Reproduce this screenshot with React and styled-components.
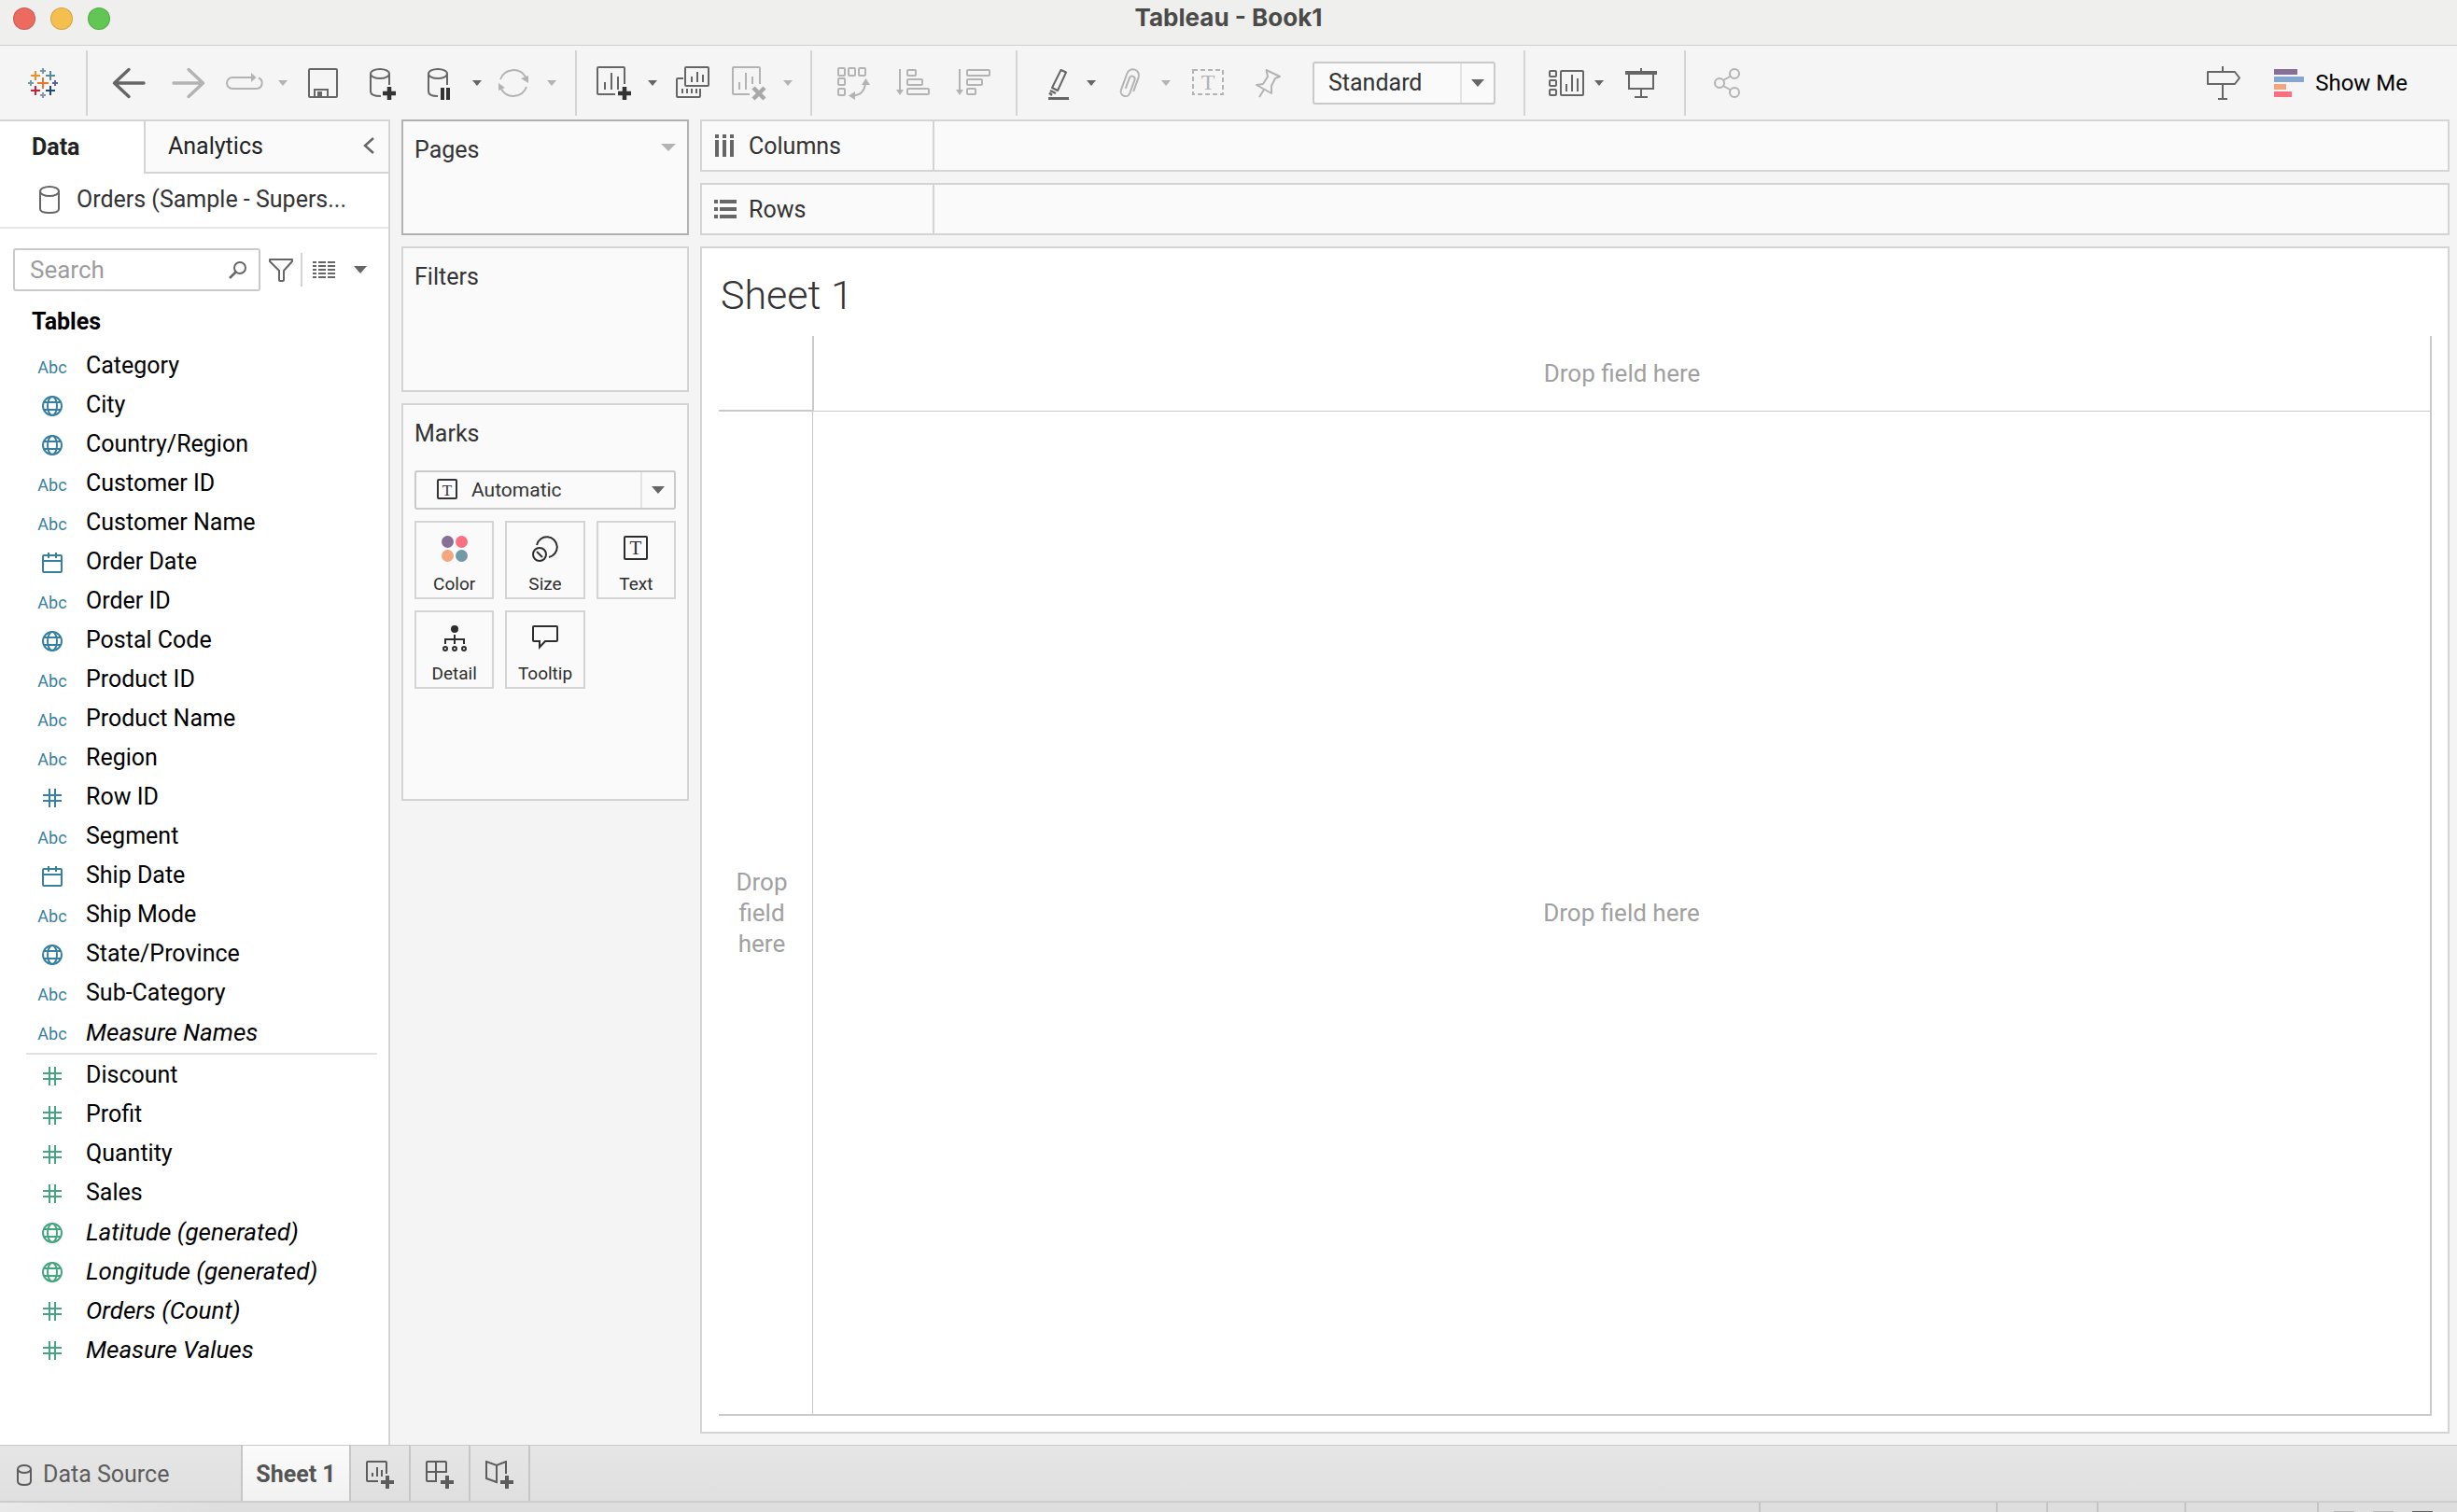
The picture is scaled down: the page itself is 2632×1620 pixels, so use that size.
import React from 'react';
import styled, { createGlobalStyle } from 'styled-components';

const GlobalStyle = createGlobalStyle`
  * {
    box-sizing: border-box;
  }

  body {
    margin: 0;
    background: #f4f4f4;
    color: #333;
    font-family: Roboto, "Liberation Sans", sans-serif;
    font-size: 25px;
    line-height: 30px;
  }

  button, input, select {
    font: inherit;
    color: inherit;
  }

  h1, h2, h3, ul {
    margin: 0;
    padding: 0;
    font: inherit;
  }
`;

const Window = styled.div`
  display: flex;
  flex-direction: column;
  min-height: 100vh;
`;

const TitleBar = styled.header`
  display: grid;
  grid-template-columns: 1fr auto 1fr;
  align-items: start;
  height: 49px;
  padding: 4px 14px 0;
  background: #efefed;
  border-bottom: 1px solid #cfcfcf;
`;

const Lights = styled.div`
  display: flex;
  gap: 16px;
  padding-top: 4px;
`;

const Light = styled.button`
  width: 24px;
  height: 24px;
  padding: 0;
  border: 1px solid rgba(0, 0, 0, 0.15);
  border-radius: 50%;
  background: ${props => props.$color};
`;

const WindowTitle = styled.h1`
  color: #4a4a48;
  font-family: Inter, sans-serif;
  font-size: 26px;
  font-weight: 700;
`;

const Toolbar = styled.div`
  display: flex;
  height: 79px;
  padding: 5px 52px 4px 0;
  background: #f5f5f5;
`;

const ToolGroup = styled.div`
  display: flex;
  align-items: center;
  padding: 0 ${props => props.$right || 8}px 0 ${props => props.$left || 8}px;
  border-right: ${props => (props.$last ? 'none' : '2px solid #d4d4d4')};
`;

const Tool = styled.button`
  display: flex;
  align-items: center;
  justify-content: center;
  width: ${props => props.$w || 64}px;
  height: 48px;
  padding: 0;
  border: none;
  background: none;
  color: #666;

  &:disabled {
    color: #b3b3b3;
  }

  svg {
    flex: none;
  }
`;

const Spacer = styled.div`
  flex: 1;
`;

const ShowMeButton = styled.button`
  display: flex;
  align-items: center;
  gap: 12px;
  padding: 0;
  margin-left: 22px;
  border: none;
  background: none;
  color: #000;
  font-size: 24px;
`;

const SelectBox = styled.div`
  display: flex;
  align-items: stretch;
  height: 42px;
  border: 2px solid #c9c9c9;
  border-radius: 3px;
  background: #fafafa;
  font-size: 21px;
`;

const FitSelectBox = styled(SelectBox)`
  width: 196px;
  height: 46px;
  margin-left: 22px;
  font-size: 25px;
`;

const SelectIcon = styled.span`
  display: flex;
  align-items: center;
  padding: 0 0 4px 22px;
`;

const Select = styled.select`
  flex: 1;
  min-width: 0;
  padding: 0 0 0 15px;
  border: none;
  background: none;
  appearance: none;
  outline: none;
`;

const SelectArrow = styled.span`
  display: flex;
  align-items: center;
  justify-content: center;
  width: 36px;
  border-left: 2px solid #e4e4e4;
  color: #666;
  pointer-events: none;
`;

const Workspace = styled.div`
  display: flex;
  flex: 1;
`;

const DataPane = styled.aside`
  width: 418px;
  flex: none;
  background: #fff;
  border-top: 2px solid #d4d4d4;
  border-right: 2px solid #d4d4d4;
`;

const PaneTabs = styled.div`
  display: flex;
  height: 56px;
`;

const PaneTab = styled.button`
  flex: ${props => (props.$active ? '0 0 154px' : '1')};
  padding: 0 0 0 ${props => (props.$active ? 34 : 24)}px;
  border: solid #d4d4d4;
  border-width: ${props => (props.$active ? '0' : '0 0 2px 2px')};
  background: ${props => (props.$active ? '#fff' : '#fafafa')};
  color: #222;
  font-weight: ${props => (props.$active ? 700 : 400)};
  text-align: left;
`;

const CollapseButton = styled.button`
  width: 42px;
  padding: 0;
  border: none;
  border-bottom: 2px solid #d4d4d4;
  background: #fafafa;
  color: #666;
`;

const SourceRow = styled.button`
  display: flex;
  align-items: center;
  gap: 18px;
  width: 100%;
  height: 59px;
  padding: 0 0 2px 42px;
  border: none;
  border-bottom: 2px solid #e6e6e6;
  background: none;

  svg {
    color: #666;
  }
`;

const SearchRow = styled.div`
  display: flex;
  align-items: center;
  height: 46px;
  margin: 21px 14px 0;
`;

const SearchBox = styled.label`
  display: flex;
  align-items: center;
  flex: 1;
  min-width: 0;
  height: 46px;
  padding: 0 12px 0 16px;
  border: 2px solid #c9c9c9;
  border-radius: 3px;
  color: #666;

  svg {
    flex: none;
  }

  input {
    flex: 1;
    width: 100%;
    min-width: 0;
    padding: 0;
    border: none;
    outline: none;
    background: none;
    font-size: 26px;
  }

  input::placeholder {
    color: #9c9c9c;
    opacity: 1;
  }
`;

const IconButton = styled.button`
  display: flex;
  align-items: center;
  justify-content: center;
  flex: none;
  width: ${props => props.$w || 42}px;
  height: 36px;
  padding: 0;
  border: none;
  border-right: ${props => (props.$divided ? '2px solid #d4d4d4' : 'none')};
  background: none;
  color: #666;
`;

const TablesHeading = styled.h2`
  padding: 18px 34px 10px;
  color: #000;
  font-weight: 700;
`;

const FieldList = styled.ul`
  padding-top: 1px;
  margin: 0 12px 0 28px;
  border-top: ${props => (props.$measures ? '2px solid #e0e0e0' : 'none')};
  list-style: none;

  & + & {
    margin-top: 1px;
  }
`;

const Field = styled.li`
  display: flex;
  align-items: center;
  height: 42px;
  color: #000;
  font-size: ${props => (props.$italic ? 26 : 25)}px;
  font-style: ${props => (props.$italic ? 'italic' : 'normal')};
`;

const FieldIcon = styled.span`
  display: flex;
  justify-content: center;
  width: 56px;
  padding-top: ${props => (props.$text ? 4 : 2)}px;
  margin-right: 8px;
  color: ${props => (props.$measure ? '#46a481' : '#3880a0')};
  font-size: 18px;
  font-style: normal;
`;

const Cards = styled.div`
  display: flex;
  flex-direction: column;
  gap: 12px;
  flex: none;
  width: 308px;
  margin: 0 12px;
`;

const Card = styled.section`
  height: ${props => props.$height}px;
  padding: 16px 12px 0;
  border: 2px solid ${props => (props.$focused ? '#b1b1b1' : '#d4d4d4')};
  background: #fafafa;
`;

const CardTitle = styled.h3`
  display: flex;
  align-items: flex-start;
  justify-content: space-between;
  height: 30px;
  margin-bottom: ${props => props.$gap || 0}px;

  button {
    display: flex;
    padding: 8px 0;
    border: none;
    background: none;
    color: #b3b3b3;
  }
`;

const MarkGrid = styled.div`
  display: grid;
  grid-template-columns: repeat(3, 1fr);
  gap: 12px;
  margin-top: 12px;
`;

const MarkButton = styled.button`
  display: flex;
  flex-direction: column;
  align-items: center;
  justify-content: space-between;
  height: 84px;
  padding: 14px 0 2px;
  border: 2px solid #d4d4d4;
  background: #fafafa;
  color: #2d2d2d;
  font-size: 19px;
  line-height: 24px;
`;

const Main = styled.main`
  display: flex;
  flex: 1;
  flex-direction: column;
  gap: 12px;
  min-width: 0;
  margin: 0 8px 12px 0;
`;

const Shelf = styled.div`
  display: flex;
  height: 56px;
  border: 2px solid #d4d4d4;
  background: #fafafa;
`;

const ShelfLabel = styled.div`
  display: grid;
  grid-template-columns: 24px 1fr;
  align-items: center;
  gap: 13px;
  width: 249px;
  padding: 2px 0 0 13px;
  border-right: 2px solid #d4d4d4;
  color: #333;

  svg {
    margin-bottom: 2px;
    color: #666;
  }
`;

const Sheet = styled.section`
  display: flex;
  flex: 1;
  flex-direction: column;
  padding: 25px 17px 17px 18px;
  border: 2px solid #d4d4d4;
  background: #fff;
`;

const SheetTitle = styled.h2`
  padding-left: 2px;
  margin-bottom: 19px;
  color: #333;
  font-size: 43px;
  font-weight: 300;
  line-height: 50px;
`;

const View = styled.div`
  display: grid;
  flex: 1;
  grid-template-columns: 100px 1fr;
  grid-template-rows: 81px 1fr;
  border: solid #cacaca;
  border-width: 0 2px 2px 0;
`;

const DropZone = styled.div`
  display: flex;
  align-items: center;
  justify-content: center;
  padding: ${props => props.$pad || '0'};
  border: 0 solid #cacaca;
  border-width: ${props => props.$border || '0'};
  color: #a0a0a0;
  font-size: 26px;
  line-height: 33px;
  text-align: center;
`;

const SheetTabs = styled.nav`
  display: flex;
  height: 62px;
  border-top: 1px solid #c9c9c9;
  border-bottom: 2px solid #cdcdcd;
  background: linear-gradient(#e6e6e6, #dfdfdf);
`;

const SheetTab = styled.button`
  display: flex;
  align-items: center;
  justify-content: ${props => (props.$wide ? 'flex-start' : 'center')};
  gap: 12px;
  width: ${props => props.$w}px;
  padding: ${props => (props.$wide ? '2px 0 0 18px' : '2px 0 0')};
  border: none;
  border-right: 2px solid #c6c6c6;
  background: ${props => (props.$active ? 'linear-gradient(#fbfbfb, #f1f1f1)' : 'none')};
  color: ${props => (props.$active ? '#555' : '#5c5c5c')};
  font-weight: ${props => (props.$active ? 700 : 400)};
`;

const StatusBar = styled.footer`
  display: flex;
  justify-content: flex-end;
  height: 10px;
  background: linear-gradient(90deg, #e9e9e9, #dedede 240px);
`;

const StatusCell = styled.div`
  display: flex;
  align-items: flex-end;
  width: ${props => props.$w}px;
  gap: 20px;
  padding-left: 16px;
  border-left: 2px solid #c4c4c4;
`;

const StatusMark = styled.span`
  width: 22px;
  height: 1px;
  background: ${props => (props.$active ? '#666' : '#b8b8b8')};
`;

const Icon = ({ w = 40, h = w, children }) => (
  <svg
    width={w}
    height={h}
    viewBox={`0 0 ${w} ${h}`}
    fill="none"
    stroke="currentColor"
    strokeWidth="2"
    aria-hidden="true"
  >
    {children}
  </svg>
);

const Caret = ({ w = 10, h = 6 }) => (
  <Icon w={w} h={h}>
    <path d={`M0 0H${w}L${w / 2} ${h}Z`} fill="currentColor" stroke="none" />
  </Icon>
);

const LOGO_CROSSES = [
  [20, 20, 6, '#e8762d'],
  [12, 12, 5, '#eb912c'],
  [28, 12, 5, '#59879b'],
  [12, 28, 5, '#c72035'],
  [28, 28, 5, '#1f447e'],
  [20, 7, 3, '#7199a6'],
  [7, 20, 3, '#7199a6'],
  [33, 20, 3, '#5b6591'],
  [20, 33, 3, '#8a90b8'],
];

const LogoIcon = () => (
  <Icon>
    {LOGO_CROSSES.map(([x, y, r, color]) => (
      <path key={`${x}-${y}`} d={`M${x - r} ${y}H${x + r}M${x} ${y - r}V${y + r}`} stroke={color} />
    ))}
  </Icon>
);

const BackIcon = () => (
  <Icon><path d="M20 5.5L4.5 20L20 34.5M5 20H36" strokeWidth="3.4" strokeLinecap="round" strokeLinejoin="round" /></Icon>
);

const ForwardIcon = () => (
  <Icon><path d="M20 5.5L35.5 20L20 34.5M35 20H4" strokeWidth="3.4" strokeLinecap="round" strokeLinejoin="round" /></Icon>
);

const RedoIcon = () => (
  <Icon>
    <path d="M28 14H7A6 6 0 0 0 7 26H33A6 6 0 0 0 35 14.5" />
    <path d="M27 9L32.5 14L27 19Z" fill="currentColor" stroke="none" />
  </Icon>
);

const SaveIcon = () => (
  <Icon>
    <rect x="5" y="5" width="30" height="30" rx="1" />
    <path d="M11 35V27H25V35" />
    <rect x="14" y="29" width="5" height="6" fill="currentColor" stroke="none" />
  </Icon>
);

const AddDataIcon = () => (
  <Icon>
    <ellipse cx="17" cy="10" rx="10" ry="5" />
    <path d="M7 10V29Q7 34 18 34M27 10V22" />
    <path d="M20 31H34M27 24V38" stroke="#333" strokeWidth="4.5" />
  </Icon>
);

const PauseDataIcon = () => (
  <Icon>
    <ellipse cx="19" cy="10" rx="10" ry="5" />
    <path d="M9 10V29Q9 34 19 34M29 10V22" />
    <path d="M24 25V38M30 25V38" stroke="#333" strokeWidth="4" />
  </Icon>
);

const RefreshIcon = () => (
  <Icon>
    <path d="M6 16A15 15 0 0 1 33 13.5M34 24A15 15 0 0 1 7 26.5" />
    <path d="M28 15L36 12V20ZM4 20V28L11 25Z" fill="currentColor" stroke="none" />
  </Icon>
);

const NewSheetIcon = () => (
  <Icon>
    <path d="M21 32H3Q2 32 2 31V4Q2 3 3 3H30Q31 3 31 4V21" />
    <path d="M10 19V27M17 9V27M24 13V27" />
    <path d="M24 31H38M31 24V38" stroke="#333" strokeWidth="4.5" />
  </Icon>
);

const DuplicateIcon = () => (
  <Icon>
    <rect x="12" y="3" width="25" height="20" rx="1" />
    <path d="M10 15H4Q3 15 3 16V34Q3 35 4 35H27Q28 35 28 34V26" />
    <path d="M19 13V19M25 8V19M31 11V19M9 26V31M14 26V31M19 26V31M24 26V31" />
  </Icon>
);

const ClearSheetIcon = () => (
  <Icon>
    <path d="M21 32H4Q3 32 3 31V4Q3 3 4 3H31Q32 3 32 4V21" />
    <path d="M10 19V27M17 9V27M24 13V21" />
    <path d="M25 25L37 37M37 25L25 37" strokeWidth="4.5" stroke="#a8a8a8" />
  </Icon>
);

const SwapIcon = () => (
  <Icon>
    <rect x="4" y="4" width="7" height="8" rx="1" />
    <rect x="15" y="4" width="7" height="8" rx="1" />
    <rect x="26" y="4" width="7" height="8" rx="1" />
    <rect x="4" y="15" width="7" height="7" rx="1" />
    <rect x="4" y="26" width="7" height="7" rx="1" />
    <path d="M33 20Q32 32 21 33.5" />
    <path d="M29 22H38L33.5 15ZM22 29V38L15 33.5Z" fill="currentColor" stroke="none" />
  </Icon>
);

const SortIcon = ({ widths }) => (
  <Icon>
    <path d="M6 5V29" />
    <path d="M2 27H10L6 33Z" fill="currentColor" stroke="none" />
    {widths.map((width, i) => (
      <rect key={width} x="14" y={6 + i * 10} width={width} height="6" rx="1" />
    ))}
  </Icon>
);

const HighlightIcon = () => (
  <Icon>
    <path d="M22.5 6L28 8.5L19 28L13 25Z" strokeLinejoin="round" />
    <path d="M11 28L17 31M10 30.5L13 33" strokeWidth="2.5" />
    <path d="M9 36.5H31" strokeWidth="3" />
  </Icon>
);

const ClipIcon = () => (
  <Icon>
    <path
      d="M27 27V11a6.5 6.5 0 0 0-13 0V30a5 5 0 0 0 10 0V15a3 3 0 0 0-6 0V27"
      transform="rotate(20 20 20)"
    />
  </Icon>
);

const LabelIcon = () => (
  <Icon>
    <rect x="4" y="6" width="32" height="26" strokeDasharray="5 3" />
    <text x="20" y="27" fontFamily="Liberation Serif, serif" fontSize="24" textAnchor="middle" fill="currentColor" stroke="none">T</text>
  </Icon>
);

const PinIcon = () => (
  <Icon>
    <path d="M18.5 6L33 13L28 15L24 23V31L8 22L15 21L20 13ZM16 27L11 35" strokeLinejoin="round" />
  </Icon>
);

const CardsIcon = () => (
  <Icon>
    <rect x="2" y="7" width="7" height="6" rx="1" />
    <rect x="2" y="17" width="7" height="6" rx="1" />
    <rect x="2" y="27" width="7" height="6" rx="1" />
    <rect x="14" y="7" width="24" height="26" rx="1" />
    <path d="M20 21V29M26 11V29M32 15V29" />
  </Icon>
);

const PresentIcon = () => (
  <Icon>
    <path d="M3 9H37" strokeWidth="4" />
    <path d="M20 4V8M7 11V26H33V11M20 26V35M13 35H27" />
  </Icon>
);

const ShareIcon = () => (
  <Icon>
    <circle cx="12" cy="20" r="5" />
    <circle cx="28" cy="10" r="5" />
    <circle cx="28" cy="30" r="5" />
    <path d="M16 17L24 12.5M16 23L24 27.5" />
  </Icon>
);

const SignpostIcon = () => (
  <Icon>
    <path d="M3 8H32L37 14.5L32 21H3ZM19 2V8M19 21V37M14 37H24" strokeLinejoin="round" />
  </Icon>
);

const ShowMeIcon = () => (
  <Icon w={32} h={30}>
    <g stroke="none">
      <rect width="25" height="6" fill="#866f97" />
      <rect y="8" width="32" height="6" fill="#84a6cf" />
      <rect y="16" width="13" height="6" fill="#f4a580" />
      <rect y="24" width="19" height="6" fill="#f97080" />
    </g>
  </Icon>
);

const CylinderIcon = ({ w = 22, h = 30 }) => (
  <Icon w={w} h={h}>
    <ellipse cx={w / 2} cy="6" rx={w / 2 - 1} ry={w > 16 ? 5 : 4} />
    <path d={`M1 6V${h - 5}Q1 ${h - 1} ${w / 2} ${h - 1}Q${w - 1} ${h - 1} ${w - 1} ${h - 5}V6`} />
  </Icon>
);

const SearchIcon = () => (
  <Icon w={20}><circle cx="12" cy="8" r="6" /><path d="M8 12L1 19" strokeWidth="2.5" /></Icon>
);

const FunnelIcon = () => (
  <Icon w={26}>
    <path d="M1 2H25V4L16 14V24Q16 25 15 25H12Q11 25 11 24V14L1 4Z" strokeLinejoin="round" />
  </Icon>
);

const ListIcon = () => (
  <Icon w={24} h={18}>
    {[1, 5, 9, 13, 17].map(y => (
      <path key={y} d={`M0 ${y}H4M6 ${y}H14M16 ${y}H24`} />
    ))}
  </Icon>
);

const GlobeIcon = () => (
  <Icon w={22}>
    <circle cx="11" cy="11" r="10" />
    <ellipse cx="11" cy="11" rx="5" ry="10" />
    <path d="M2 7H20M2 15H20" />
  </Icon>
);

const CalendarIcon = () => (
  <Icon w={22}>
    <rect x="1" y="3" width="20" height="18" rx="1" />
    <path d="M1 9H21M7 0V6M15 0V6" />
  </Icon>
);

const HashIcon = () => (
  <Icon w={22}><path d="M1 8H21M1 14H21M8 1V21M14 1V21" /></Icon>
);

const TextMarkIcon = ({ w = 26 }) => (
  <Icon w={w} h={28}>
    <rect x="1" y={27 - w} width={w - 2} height={w - 2} rx="1" />
    <text
      x={w / 2}
      y={w > 22 ? 20 : 22}
      fontFamily="Liberation Serif, serif"
      fontSize={w - 5}
      textAnchor="middle"
      fill="currentColor"
      stroke="none"
    >
      T
    </text>
  </Icon>
);

const ColorMarkIcon = () => (
  <Icon w={28}>
    <g stroke="none">
      <circle cx="6.5" cy="6.5" r="6.5" fill="#866f97" />
      <circle cx="21.5" cy="6.5" r="6.5" fill="#f97080" />
      <circle cx="6.5" cy="21.5" r="6.5" fill="#f4a67e" />
      <circle cx="21.5" cy="21.5" r="6.5" fill="#7199a6" />
    </g>
  </Icon>
);

const SizeMarkIcon = () => (
  <Icon w={28}>
    <path d="M5 10A11 11 0 1 1 18 23" />
    <circle cx="8" cy="20" r="7" />
    <path d="M5 17L11 23" />
  </Icon>
);

const DetailMarkIcon = () => (
  <Icon w={28}>
    <circle cx="14" cy="4" r="4" fill="currentColor" stroke="none" />
    <path d="M14 10V20M4 20V15H24V20" />
    <circle cx="4" cy="25" r="2" />
    <circle cx="14" cy="25" r="2" />
    <circle cx="24" cy="25" r="2" />
  </Icon>
);

const TooltipMarkIcon = () => (
  <Icon w={28}>
    <path d="M2 1H26Q27 1 27 2V16Q27 17 26 17H14L8 23.5V17H2Q1 17 1 16V2Q1 1 2 1Z" />
  </Icon>
);

const ColumnsIcon = () => (
  <Icon w={22} h={24}><path d="M3 0V4M11 0V4M19 0V4M3 6V24M11 6V24M19 6V24" strokeWidth="4" /></Icon>
);

const RowsIcon = () => (
  <Icon w={24} h={20}><path d="M0 2H4M6 2H24M0 10H4M6 10H24M0 18H4M6 18H24" strokeWidth="4" /></Icon>
);

const TabPlus = () => <path d="M16 23H30M23 16V30" strokeWidth="4" />;

const AddWorksheetIcon = () => (
  <Icon w={30}>
    <path d="M13 22H2Q1 22 1 21V2Q1 1 2 1H21Q22 1 22 2V14M7 13V17M12 7V17M17 10V17" />
    <TabPlus />
  </Icon>
);

const AddDashboardIcon = () => (
  <Icon w={30}>
    <path d="M12 22H2Q1 22 1 21V2Q1 1 2 1H21Q22 1 22 2V12H1M11 1V22" />
    <TabPlus />
  </Icon>
);

const AddStoryIcon = () => (
  <Icon w={30}>
    <path d="M22 14V1L12 5L1 1V19L12 23V5" />
    <TabPlus />
  </Icon>
);

const DIMENSIONS = [
  ['text', 'Category'],
  ['geo', 'City'],
  ['geo', 'Country/Region'],
  ['text', 'Customer ID'],
  ['text', 'Customer Name'],
  ['date', 'Order Date'],
  ['text', 'Order ID'],
  ['geo', 'Postal Code'],
  ['text', 'Product ID'],
  ['text', 'Product Name'],
  ['text', 'Region'],
  ['number', 'Row ID'],
  ['text', 'Segment'],
  ['date', 'Ship Date'],
  ['text', 'Ship Mode'],
  ['geo', 'State/Province'],
  ['text', 'Sub-Category'],
  ['text', 'Measure Names', true],
];

const MEASURES = [
  ['number', 'Discount'],
  ['number', 'Profit'],
  ['number', 'Quantity'],
  ['number', 'Sales'],
  ['geo', 'Latitude (generated)', true],
  ['geo', 'Longitude (generated)', true],
  ['number', 'Orders (Count)', true],
  ['number', 'Measure Values', true],
];

const FIELD_ICONS = {
  text: 'Abc',
  geo: <GlobeIcon />,
  date: <CalendarIcon />,
  number: <HashIcon />,
};

const MARKS = [
  ['Color', <ColorMarkIcon />],
  ['Size', <SizeMarkIcon />],
  ['Text', <TextMarkIcon />],
  ['Detail', <DetailMarkIcon />],
  ['Tooltip', <TooltipMarkIcon />],
];

const Fields = ({ fields, measures = false }) => (
  <FieldList $measures={measures}>
    {fields.map(([type, name, italic]) => (
      <Field key={name} $italic={italic}>
        <FieldIcon $measure={measures} $text={type === 'text'}>{FIELD_ICONS[type]}</FieldIcon>
        {name}
      </Field>
    ))}
  </FieldList>
);

const MainToolbar = () => (
  <Toolbar>
    <ToolGroup $left={14} $right={14}>
      <Tool aria-label="Start page"><LogoIcon /></Tool>
    </ToolGroup>
    <ToolGroup $left={12}>
      <Tool aria-label="Undo"><BackIcon /></Tool>
      <Tool aria-label="Redo" disabled><ForwardIcon /></Tool>
      <Tool $w={56} aria-label="Replay" disabled><RedoIcon /></Tool>
      <Tool $w={26} aria-label="Replay options" disabled><Caret /></Tool>
      <Tool $w={60} aria-label="Save"><SaveIcon /></Tool>
      <Tool $w={68} aria-label="New data source"><AddDataIcon /></Tool>
      <Tool $w={52} aria-label="Pause auto updates"><PauseDataIcon /></Tool>
      <Tool $w={30} aria-label="Auto update options"><Caret /></Tool>
      <Tool $w={48} aria-label="Run update" disabled><RefreshIcon /></Tool>
      <Tool $w={34} aria-label="Run update options" disabled><Caret /></Tool>
    </ToolGroup>
    <ToolGroup>
      <Tool aria-label="New worksheet"><NewSheetIcon /></Tool>
      <Tool $w={18} aria-label="New options"><Caret /></Tool>
      <Tool $w={68} aria-label="Duplicate sheet"><DuplicateIcon /></Tool>
      <Tool $w={52} aria-label="Clear sheet" disabled><ClearSheetIcon /></Tool>
      <Tool $w={32} aria-label="Clear options" disabled><Caret /></Tool>
    </ToolGroup>
    <ToolGroup $left={12} $right={14}>
      <Tool aria-label="Swap rows and columns" disabled><SwapIcon /></Tool>
      <Tool aria-label="Sort ascending" disabled><SortIcon widths={[9, 16, 23]} /></Tool>
      <Tool aria-label="Sort descending" disabled><SortIcon widths={[24, 16, 9]} /></Tool>
    </ToolGroup>
    <ToolGroup $left={18} $right={30}>
      <Tool $w={52} aria-label="Highlight"><HighlightIcon /></Tool>
      <Tool $w={18} aria-label="Highlight options"><Caret /></Tool>
      <Tool $w={64} aria-label="Group members" disabled><ClipIcon /></Tool>
      <Tool $w={14} aria-label="Group options" disabled><Caret /></Tool>
      <Tool $w={76} aria-label="Show mark labels" disabled><LabelIcon /></Tool>
      <Tool $w={52} aria-label="Fix axes" disabled><PinIcon /></Tool>
      <FitSelectBox>
        <Select aria-label="Fit" defaultValue="Standard">
          <option>Standard</option>
        </Select>
        <SelectArrow><Caret w={14} h={8} /></SelectArrow>
      </FitSelectBox>
    </ToolGroup>
    <ToolGroup $left={16}>
      <Tool $w={56} aria-label="Show or hide cards"><CardsIcon /></Tool>
      <Tool $w={14} aria-label="Card options"><Caret /></Tool>
      <Tool $w={76} aria-label="Presentation mode"><PresentIcon /></Tool>
    </ToolGroup>
    <ToolGroup $left={12} $last>
      <Tool aria-label="Share workbook" disabled><ShareIcon /></Tool>
    </ToolGroup>
    <Spacer />
    <ToolGroup $last $right={1}>
      <Tool aria-label="Guide"><SignpostIcon /></Tool>
      <ShowMeButton><ShowMeIcon />Show Me</ShowMeButton>
    </ToolGroup>
  </Toolbar>
);

const App = () => (
  <>
    <GlobalStyle />
    <Window>
      <TitleBar>
        <Lights>
          <Light $color="#ed6a5f" aria-label="Close" />
          <Light $color="#f5bf50" aria-label="Minimize" />
          <Light $color="#62c655" aria-label="Zoom" />
        </Lights>
        <WindowTitle>Tableau - Book1</WindowTitle>
      </TitleBar>

      <MainToolbar />

      <Workspace>
        <DataPane>
          <PaneTabs>
            <PaneTab $active>Data</PaneTab>
            <PaneTab>Analytics</PaneTab>
            <CollapseButton aria-label="Collapse pane">
              <Icon w={12} h={18}><path d="M11 1L2 9L11 17" strokeWidth="2.5" /></Icon>
            </CollapseButton>
          </PaneTabs>
          <SourceRow><CylinderIcon />Orders (Sample - Supers...</SourceRow>
          <SearchRow>
            <SearchBox>
              <input type="text" placeholder="Search" aria-label="Search" />
              <SearchIcon />
            </SearchBox>
            <IconButton $w={45} $divided aria-label="Filter fields"><FunnelIcon /></IconButton>
            <IconButton $w={46} aria-label="View as"><ListIcon /></IconButton>
            <IconButton $w={32} aria-label="View options"><Caret w={14} h={8} /></IconButton>
          </SearchRow>
          <TablesHeading>Tables</TablesHeading>
          <Fields fields={DIMENSIONS} />
          <Fields fields={MEASURES} measures />
        </DataPane>

        <Cards>
          <Card $height={124} $focused>
            <CardTitle>
              Pages
              <button aria-label="Pages menu"><Caret w={16} h={8} /></button>
            </CardTitle>
          </Card>
          <Card $height={156}>
            <CardTitle>Filters</CardTitle>
          </Card>
          <Card $height={426}>
            <CardTitle $gap={24}>Marks</CardTitle>
            <SelectBox>
              <SelectIcon><TextMarkIcon w={22} /></SelectIcon>
              <Select aria-label="Mark type" defaultValue="Automatic">
                <option>Automatic</option>
              </Select>
              <SelectArrow><Caret w={14} h={8} /></SelectArrow>
            </SelectBox>
            <MarkGrid>
              {MARKS.map(([name, icon]) => (
                <MarkButton key={name}>{icon}{name}</MarkButton>
              ))}
            </MarkGrid>
          </Card>
        </Cards>

        <Main>
          <Shelf><ShelfLabel><ColumnsIcon />Columns</ShelfLabel></Shelf>
          <Shelf><ShelfLabel><RowsIcon />Rows</ShelfLabel></Shelf>
          <Sheet>
            <SheetTitle>Sheet 1</SheetTitle>
            <View>
              <DropZone $border="0 0 2px 0" />
              <DropZone $border="0 0 1px 2px">Drop field here</DropZone>
              <DropZone $pad="0 16px 0 8px">Drop field here</DropZone>
              <DropZone $border="0 0 0 1px">Drop field here</DropZone>
            </View>
          </Sheet>
        </Main>
      </Workspace>

      <SheetTabs>
        <SheetTab $w={260} $wide><CylinderIcon w={16} h={24} />Data Source</SheetTab>
        <SheetTab $w={116} $active>Sheet 1</SheetTab>
        <SheetTab $w={64} aria-label="New worksheet"><AddWorksheetIcon /></SheetTab>
        <SheetTab $w={64} aria-label="New dashboard"><AddDashboardIcon /></SheetTab>
        <SheetTab $w={64} aria-label="New story"><AddStoryIcon /></SheetTab>
      </SheetTabs>
      <StatusBar>
        <StatusCell $w={254} />
        <StatusCell $w={54} />
        <StatusCell $w={54} />
        <StatusCell $w={94} />
        <StatusCell $w={142} />
        <StatusCell $w={150}>
          <StatusMark />
          <StatusMark />
          <StatusMark $active />
        </StatusCell>
      </StatusBar>
    </Window>
  </>
);

export default App;
